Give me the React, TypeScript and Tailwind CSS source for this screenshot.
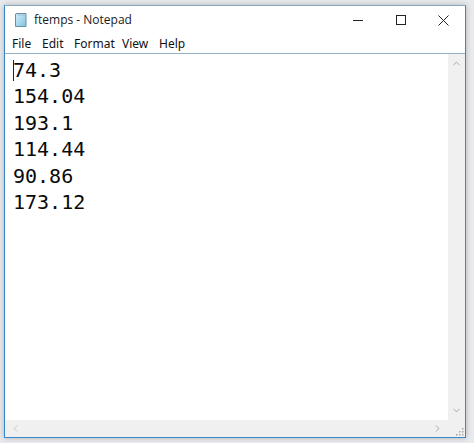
import { ChevronUp, ChevronDown, ChevronLeft, ChevronRight } from "lucide-react";

const lines = ["74.3", "154.04", "193.1", "114.44", "90.86", "173.12"];

// menu labels with the width each one takes in the bar
const menu = [
  { label: "File", w: "w-[30px]" },
  { label: "Edit", w: "w-[32px]" },
  { label: "Format", w: "w-[48px]" },
  { label: "View", w: "w-[37px]" },
  { label: "Help", w: "w-[40px]" },
];

function NotepadIcon() {
  return (
    <svg width="16" height="16" viewBox="0 0 16 16">
      <defs>
        <linearGradient id="pad" x1="0" y1="0" x2="1" y2="1">
          <stop offset="0" stopColor="#d6eef8" />
          <stop offset="1" stopColor="#7fc3e0" />
        </linearGradient>
      </defs>
      <path d="M3 1.5h10v13H2.5V2z" fill="url(#pad)" stroke="#6d8fa3" strokeWidth="1" />
      <path d="M4 3h8" stroke="#9fc4d6" strokeWidth="1" />
    </svg>
  );
}

function Grip() {
  return (
    <svg width="10" height="10" viewBox="0 0 10 10" fill="#a6a6a6">
      <rect x="8" y="2" width="1.5" height="1.5" />
      <rect x="5" y="5" width="1.5" height="1.5" />
      <rect x="8" y="5" width="1.5" height="1.5" />
      <rect x="2" y="8" width="1.5" height="1.5" />
      <rect x="5" y="8" width="1.5" height="1.5" />
      <rect x="8" y="8" width="1.5" height="1.5" />
    </svg>
  );
}

export default function App() {
  return (
    <div className="w-[474px] h-[443px] overflow-hidden bg-[#e9ebee] pt-[5px] pl-[4px]">
      {/* notepad window */}
      <div className="w-[462px] h-[433px] flex flex-col bg-white border border-[#3a87c8] border-t-[#8aa9c2] shadow-[0_0_6px_rgba(0,0,0,0.25)]">
        <div className="h-[28px] flex items-center shrink-0">
          <div className="ml-[8px] flex items-center">
            <NotepadIcon />
          </div>
          <span className="ml-[5px] text-[12px] text-[#1a1a1a] font-['Open_Sans','Noto_Sans',sans-serif]">
            ftemps - Notepad
          </span>
          <div className="ml-auto flex h-full">
            <div className="w-[43px] flex items-center justify-center">
              <div className="w-[10px] h-[1px] bg-[#222]" />
            </div>
            <div className="w-[43px] flex items-center justify-center">
              <div className="w-[10px] h-[10px] border border-[#222]" />
            </div>
            <div className="w-[43px] flex items-center justify-center">
              <svg width="11" height="11" viewBox="0 0 11 11" stroke="#222" strokeWidth="1">
                <path d="M0.5 0.5l10 10M10.5 0.5l-10 10" />
              </svg>
            </div>
          </div>
        </div>
        <div className="h-[19px] flex items-center shrink-0 pl-[7px] text-[12px] text-[#111] font-['Noto_Sans','Open_Sans',sans-serif]">
          {menu.map((m) => (
            <span key={m.label} className={m.w}>
              {m.label}
            </span>
          ))}
        </div>
        <div className="flex-1 flex flex-col border-t border-[#93b0c4] min-h-0">
          <div className="flex-1 flex min-h-0">
            <div className="flex-1 pl-[8px] pt-[3px] font-['DejaVu_Sans_Mono','Liberation_Mono',monospace] text-[20px] leading-[26.4px] text-[#0a0a0a]">
              {lines.map((l, i) => (
                <div key={i} className="relative">
                  {i === 0 && <span className="absolute left-0 top-[3px] w-[1px] h-[21px] bg-[#222]" />}
                  {l}
                </div>
              ))}
            </div>
            <div className="w-[17px] bg-[#f0f0f0] flex flex-col items-center justify-between py-[4px]">
              <ChevronUp size={11} color="#a3a3a3" strokeWidth={2} />
              <ChevronDown size={11} color="#a3a3a3" strokeWidth={2} />
            </div>
          </div>
          <div className="h-[17px] flex bg-[#f0f0f0] shrink-0">
            <div className="flex-1 flex items-center justify-between px-[5px]">
              <ChevronLeft size={11} color="#c4c4c4" strokeWidth={2} />
              <ChevronRight size={11} color="#a3a3a3" strokeWidth={2} />
            </div>
            <div className="w-[17px] flex items-end justify-end pr-[1px] pb-[1px]">
              <Grip />
            </div>
          </div>
        </div>
      </div>
    </div>
  );
}
